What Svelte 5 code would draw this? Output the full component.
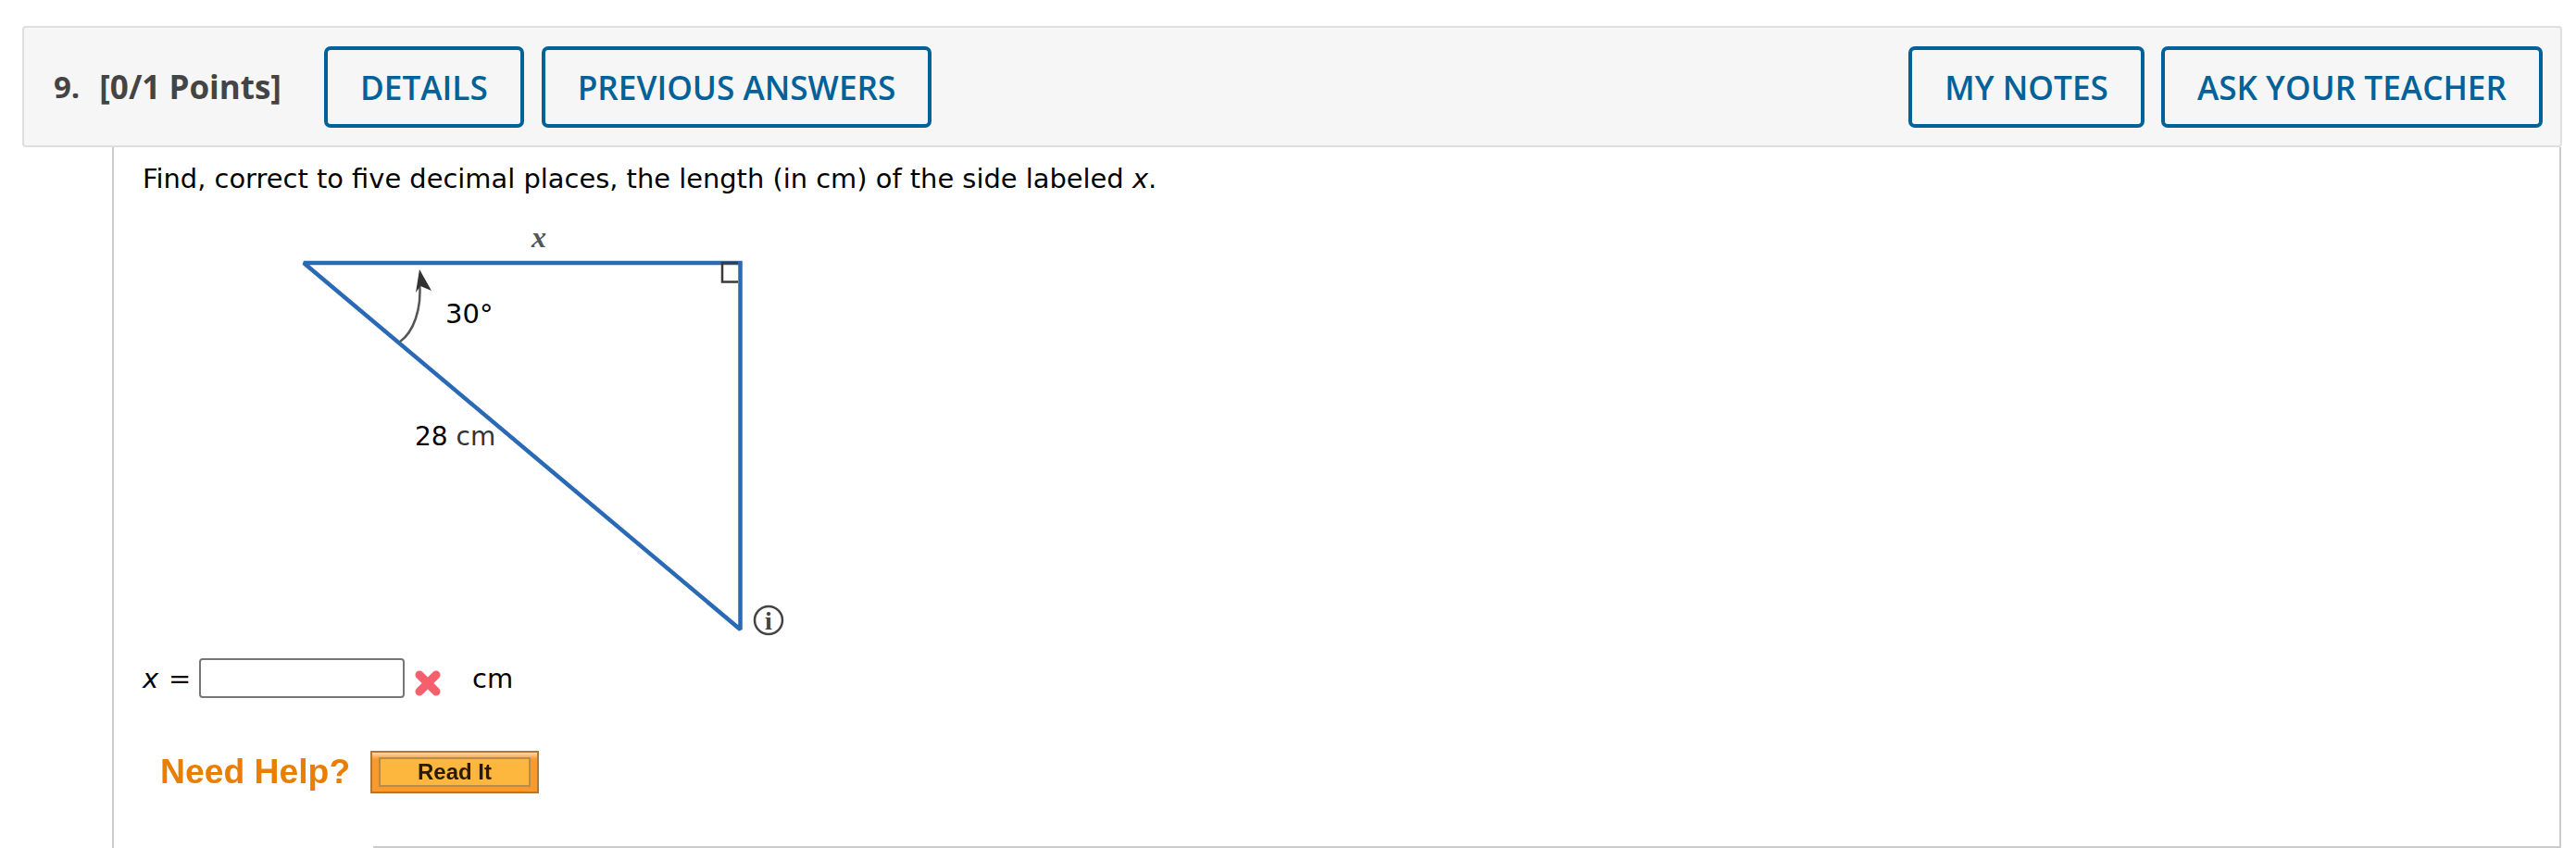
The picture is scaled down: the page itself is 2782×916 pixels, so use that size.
<script>
  const leftButtons = ['DETAILS', 'PREVIOUS ANSWERS'];
  const rightButtons = ['MY NOTES', 'ASK YOUR TEACHER'];
</script>

<div class="page">
  <header class="bar">
    <span class="number">9.</span>
    <span class="points">[0/1 Points]</span>
    <div class="group">
      {#each leftButtons as label}
        <button class="btn">{label}</button>
      {/each}
    </div>
    <div class="group end">
      {#each rightButtons as label}
        <button class="btn">{label}</button>
      {/each}
    </div>
  </header>

  <main class="body">
    <div class="edge"></div>
    <p class="question">Find, correct to five decimal places, the length (in cm) of the side labeled <i>x</i>.</p>

    <svg class="figure" width="560" height="470" viewBox="0 0 560 470" aria-label="Right triangle">
      <path class="side" d="M28 53 H499.5 V449 Z" />
      <path class="ink" d="M497 53 H480 V73.5 H497" />
      <path class="arrow" d="M132 138 C146 128 156 104 153 72" />
      <path class="head" d="M153 60 L166 83 L154 78 L149 85 Z" />
      <text class="lx" x="274" y="36">x</text>
      <text class="lab" x="181" y="118">30°</text>
      <text class="lab small" x="148" y="250">28 <tspan class="grey">cm</tspan></text>
      <circle class="info" cx="530" cy="439" r="15" />
      <text class="i" x="530" y="449">i</text>
    </svg>

    <div class="answer">
      <i class="var">x</i><span class="eq">=</span>
      <input class="field" type="text" aria-label="x" />
      <svg class="wrong" width="30" height="30" viewBox="0 0 30 30" aria-label="Incorrect">
        <path d="M6 6 L24 24 M24 6 L6 24" />
      </svg>
      <span class="unit">cm</span>
    </div>

    <div class="help">
      <span class="need">Need Help?</span>
      <button class="read"><span>Read It</span></button>
    </div>
  </main>
</div>

<style>
  :global(body) {
    margin: 0;
    background: #fff;
  }
  .page {
    width: 2782px;
    height: 916px;
    padding: 28px 15px 0 24px;
    box-sizing: border-box;
    overflow: hidden;
  }
  .bar {
    display: flex;
    align-items: center;
    height: 131px;
    box-sizing: border-box;
    padding: 0 19px 0 32px;
    background: #f6f6f6;
    border: 2px solid #dfdfdf;
    border-radius: 4px;
    font-family: "Open Sans", sans-serif;
  }
  .number, .points {
    font-size: 35px;
    font-weight: 700;
    color: #444;
  }
  .number {
    font-size: 33px;
  }
  .points {
    margin-left: 21px;
  }
  .group {
    display: flex;
    gap: 19px;
    margin-left: 46px;
  }
  .group.end {
    margin-left: auto;
    gap: 18px;
  }
  .btn {
    height: 88px;
    padding: 0 35px;
    background: transparent;
    border: 4px solid #006298;
    border-radius: 7px;
    color: #006298;
    font: 600 35.2px "Open Sans", sans-serif;
  }
  .body {
    position: relative;
    width: 2645px;
    height: 758px;
    margin-left: 97px;
    box-sizing: border-box;
    padding-left: 31px;
    border-left: 2px solid #ccc;
    border-right: 2px solid #ccc;
    font-family: "DejaVu Sans", sans-serif;
    color: #000;
  }
  .edge {
    position: absolute;
    left: 280px;
    right: 0;
    top: 755px;
    height: 2px;
    background: #ccc;
  }
  .question {
    margin: 0;
    padding-top: 18px;
    font-size: 28.9px;
    line-height: 32px;
    height: 32px;
  }
  .figure {
    display: block;
    margin: 22px 0 0 146px;
  }
  .lx {
    font: italic 700 32px "Liberation Serif", serif;
    fill: #555;
  }
  .lab {
    font: 29px "DejaVu Sans", sans-serif;
    fill: #000;
  }
  .small {
    font-size: 28px;
  }
  .grey {
    fill: #333;
  }
  .side {
    fill: none;
    stroke: #2a6ab5;
    stroke-width: 4.5;
    stroke-linejoin: miter;
    stroke-miterlimit: 2;
  }
  .ink {
    fill: none;
    stroke: #3a3a3a;
    stroke-width: 2.5;
  }
  .arrow {
    fill: none;
    stroke: #555;
    stroke-width: 2.5;
  }
  .head {
    fill: #333;
  }
  .info {
    fill: #fff;
    stroke: #444;
    stroke-width: 2.5;
  }
  .i {
    font: 700 28px "Liberation Serif", serif;
    text-anchor: middle;
    fill: #444;
  }
  .answer {
    display: flex;
    align-items: center;
    height: 43px;
    margin-top: 10px;
    font-size: 29px;
  }
  .var {
    width: 28px;
  }
  .eq {
    width: 33px;
  }
  .field {
    width: 222px;
    height: 43px;
    box-sizing: border-box;
    padding: 0;
    background: #fff;
    border: 2px solid #767676;
    border-radius: 4px;
  }
  .wrong {
    margin: 10px 0 0 10px;
  }
  .wrong path {
    fill: none;
    stroke: #f5606c;
    stroke-width: 9;
    stroke-linecap: round;
  }
  .unit {
    margin-left: 33px;
  }
  .help {
    display: flex;
    align-items: center;
    margin: 57px 0 0 19px;
    height: 46px;
  }
  .need {
    width: 227px;
    margin-top: -2px;
    font: 700 37.3px "Liberation Sans", sans-serif;
    color: #e87f00;
    filter: blur(0.4px);
  }
  .read {
    width: 182px;
    height: 46px;
    box-sizing: border-box;
    padding: 5px 7px;
    background: linear-gradient(#fbdcb6 0, #f89a2e 7px);
    border: 2px solid #b5762f;
  }
  .read span {
    display: block;
    height: 100%;
    box-sizing: border-box;
    background: #fdb63e;
    border: 2px solid #b58c4f;
    color: #2a1a00;
    font: 700 24px/28px "Liberation Sans", sans-serif;
    text-align: center;
    filter: blur(0.3px);
  }
</style>
